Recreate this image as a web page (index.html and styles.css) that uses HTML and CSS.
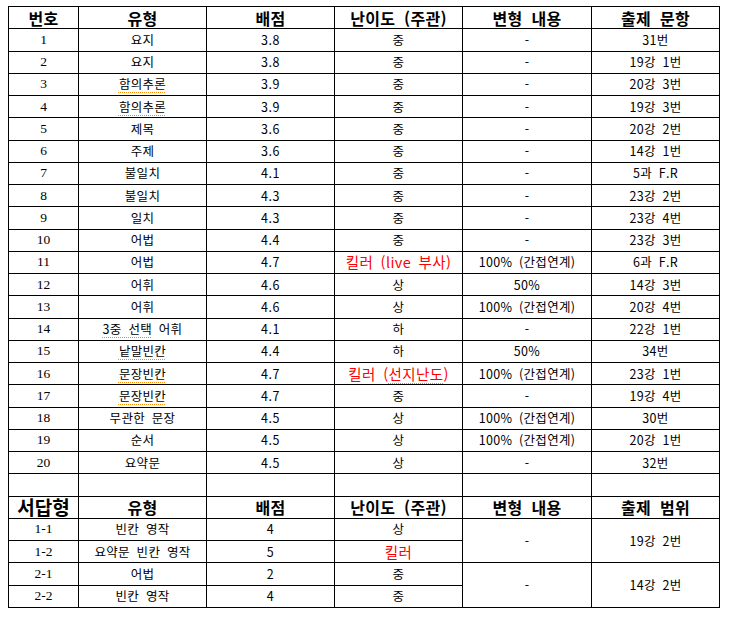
FILE: index.html
```html
<!DOCTYPE html>
<html lang="ko">
<head>
<meta charset="utf-8">
<title>문항 분석표</title>
<link rel="stylesheet" href="styles.css">
</head>
<body>
<table class="grid">
  <colgroup>
    <col class="c-no"><col class="c-type"><col class="c-pt"><col class="c-lv"><col class="c-var"><col class="c-src">
  </colgroup>
  <tbody>
    <tr class="head"><th class="hno">번호</th><th>유형</th><th>배점</th><th>난이도 (주관)</th><th>변형 내용</th><th>출제 문항</th></tr>
    <tr><td class="no">1</td><td>요지</td><td class="pt">3.8</td><td>중</td><td>-</td><td>31번</td></tr>
    <tr><td class="no">2</td><td>요지</td><td class="pt">3.8</td><td>중</td><td>-</td><td>19강 1번</td></tr>
    <tr><td class="no">3</td><td><span class="spell">함의추론</span></td><td class="pt">3.9</td><td>중</td><td>-</td><td>20강 3번</td></tr>
    <tr><td class="no">4</td><td><span class="spell">함의추론</span></td><td class="pt">3.9</td><td>중</td><td>-</td><td>19강 3번</td></tr>
    <tr><td class="no">5</td><td>제목</td><td class="pt">3.6</td><td>중</td><td>-</td><td>20강 2번</td></tr>
    <tr><td class="no">6</td><td>주제</td><td class="pt">3.6</td><td>중</td><td>-</td><td>14강 1번</td></tr>
    <tr><td class="no">7</td><td>불일치</td><td class="pt">4.1</td><td>중</td><td>-</td><td>5과 F.R</td></tr>
    <tr><td class="no">8</td><td>불일치</td><td class="pt">4.3</td><td>중</td><td>-</td><td>23강 2번</td></tr>
    <tr><td class="no">9</td><td>일치</td><td class="pt">4.3</td><td>중</td><td>-</td><td>23강 4번</td></tr>
    <tr><td class="no">10</td><td>어법</td><td class="pt">4.4</td><td>중</td><td>-</td><td>23강 3번</td></tr>
    <tr><td class="no">11</td><td>어법</td><td class="pt">4.7</td><td class="killer">킬러 (live 부사)</td><td>100% (간접연계)</td><td>6과 F.R</td></tr>
    <tr><td class="no">12</td><td>어휘</td><td class="pt">4.6</td><td>상</td><td>50%</td><td>14강 3번</td></tr>
    <tr><td class="no">13</td><td>어휘</td><td class="pt">4.6</td><td>상</td><td>100% (간접연계)</td><td>20강 4번</td></tr>
    <tr><td class="no">14</td><td><span class="spell">3중 선택</span> 어휘</td><td class="pt">4.1</td><td>하</td><td>-</td><td>22강 1번</td></tr>
    <tr><td class="no">15</td><td><span class="spell">낱말빈칸</span></td><td class="pt">4.4</td><td>하</td><td>50%</td><td>34번</td></tr>
    <tr><td class="no">16</td><td><span class="spell">문장빈칸</span></td><td class="pt">4.7</td><td class="killer">킬러 (<span class="spell">선지난도</span>)</td><td>100% (간접연계)</td><td>23강 1번</td></tr>
    <tr><td class="no">17</td><td><span class="spell">문장빈칸</span></td><td class="pt">4.7</td><td>중</td><td>-</td><td>19강 4번</td></tr>
    <tr><td class="no">18</td><td>무관한 문장</td><td class="pt">4.5</td><td>상</td><td>100% (간접연계)</td><td>30번</td></tr>
    <tr><td class="no">19</td><td>순서</td><td class="pt">4.5</td><td>상</td><td>100% (간접연계)</td><td>20강 1번</td></tr>
    <tr><td class="no">20</td><td>요약문</td><td class="pt">4.5</td><td>상</td><td>-</td><td>32번</td></tr>
    <tr><td></td><td></td><td></td><td></td><td></td><td></td></tr>
    <tr class="head"><th class="hbig">서답형</th><th>유형</th><th>배점</th><th>난이도 (주관)</th><th>변형 내용</th><th>출제 범위</th></tr>
    <tr><td class="no">1-1</td><td>빈칸 영작</td><td class="pt">4</td><td>상</td><td rowspan="2">-</td><td rowspan="2">19강 2번</td></tr>
    <tr><td class="no">1-2</td><td>요약문 빈칸 영작</td><td class="pt">5</td><td class="killer">킬러</td></tr>
    <tr><td class="no">2-1</td><td>어법</td><td class="pt">2</td><td>중</td><td rowspan="2">-</td><td rowspan="2">14강 2번</td></tr>
    <tr><td class="no">2-2</td><td>빈칸 영작</td><td class="pt">4</td><td>중</td></tr>
  </tbody>
</table>
</body>
</html>
```

FILE: styles.css
```css
html, body {
  background: #ffffff;
}
body {
  margin: 6px 0 0 8px;
  font-family: "Noto Sans CJK KR", "Noto Sans", sans-serif;
  color: #000000;
}
.grid {
  border-collapse: collapse;
  table-layout: fixed;
  width: 711px;
}
.c-no { width: 70px; }
.c-type { width: 128px; }
.c-pt { width: 128px; }
.c-lv { width: 128px; }
.c-var { width: 129px; }
.c-src { width: 128px; }
.grid tr {
  height: 22.26px;
}
.grid td, .grid th {
  border: 1px solid #000000;
  padding: 0;
  text-align: center;
  vertical-align: middle;
  font-size: 12.5px;
  line-height: 16px;
  font-weight: 400;
  white-space: nowrap;
  letter-spacing: 0.3px;
  word-spacing: 3px;
}
.grid th {
  font-size: 16px;
  font-weight: 700;
  line-height: 20px;
  word-spacing: 4px;
}
.grid th.hbig {
  font-size: 19px;
  line-height: 20px;
  letter-spacing: 0;
}
.grid td.no {
  font-family: "Liberation Serif", "Noto Sans CJK KR", serif;
  font-size: 13.5px;
  letter-spacing: 0;
}
.grid td.pt {
  letter-spacing: 0.5px;
}
.grid td.killer {
  color: #ff0000;
  font-size: 14.5px;
  letter-spacing: 0.4px;
}
.spell {
  text-decoration: underline dotted #ff8a00;
  text-underline-offset: 3px;
  text-decoration-thickness: 1px;
}
```
